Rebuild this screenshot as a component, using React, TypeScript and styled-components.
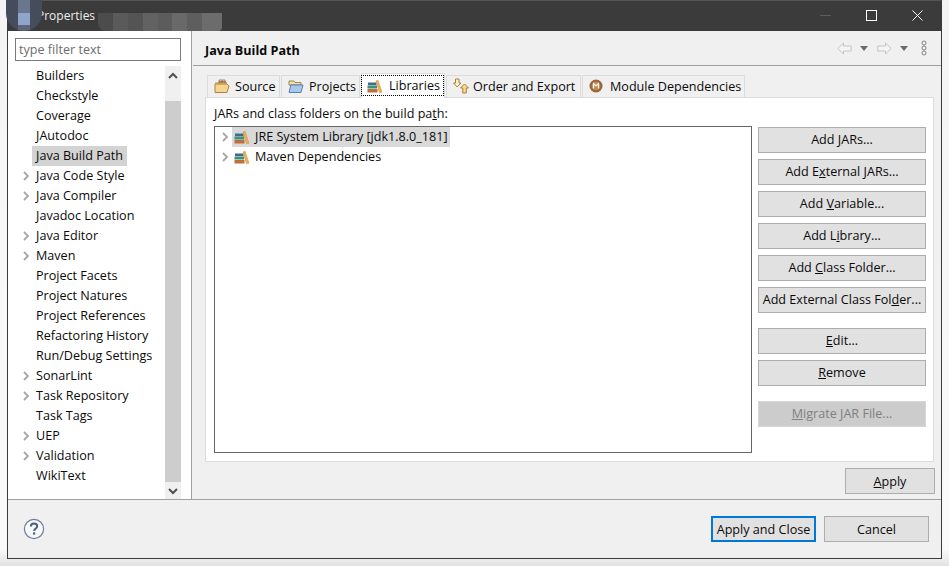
import React from 'react'
import styled, { createGlobalStyle } from 'styled-components'

const GlobalStyle = createGlobalStyle`
  html, body {
    margin: 0;
    padding: 0;
    background: #e8e8e8;
  }
  body {
    font-family: "Open Sans", "Noto Sans", "Liberation Sans", sans-serif;
    font-size: 12.6px;
    color: #0a0a0a;
  }
`

const Screen = styled.div`
  width: 949px;
  height: 566px;
  padding-left: 7px;
  box-sizing: border-box;
  overflow: hidden;
  position: relative;
  background: linear-gradient(#f4f4f4, #fafafa 97%, #e2e2e2);
`

const Window = styled.div`
  width: 935px;
  height: 559px;
  display: flex;
  flex-direction: column;
  background: #f0f0f0;
  border: solid #3b3b3b;
  border-width: 0 1px 1px 1px;
  box-sizing: border-box;
`

const TitleBar = styled.div`
  height: 31px;
  flex: none;
  display: flex;
  align-items: center;
  justify-content: space-between;
  background: #3b3b3b;
  border-top: 1px solid #555;
  box-sizing: border-box;
  color: #eee;
  padding-left: 29px;
`

const TitleText = styled.span`
  font-size: 12px;
  margin-top: -1px;
`

const WindowControls = styled.div`
  display: flex;
  align-items: center;
  gap: 35px;
  padding-right: 18px;
  margin-bottom: 2px;

  svg {
    display: block;
  }
`

const AvatarSmudge = styled.div`
  position: absolute;
  left: 6px;
  top: 0;
  width: 36px;
  height: 31px;
  border-radius: 0 0 18px 18px;
  background:
    linear-gradient(#8ea4c8, #8ea4c8) 12px 13px / 12px 12px no-repeat,
    linear-gradient(#6a768c, #6a768c) 12px 0 / 12px 13px no-repeat,
    linear-gradient(#5c6678, #5c6678) 12px 25px / 12px 6px no-repeat,
    #454c5b;
`

const NameSmudge = styled.div`
  position: absolute;
  left: 98px;
  top: 13px;
  width: 124px;
  height: 18px;
  border-radius: 0 0 4px 8px;
  background: linear-gradient(
    90deg,
    #4c4c4c 0 12%,
    #5a5a5a 12% 24%,
    #545454 24% 36%,
    #626262 36% 48%,
    #5c5c5c 48% 60%,
    #696969 60% 72%,
    #5e5e5e 72% 84%,
    #6c6c6c 84%
  );
`

const Body = styled.div`
  flex: 1;
  min-height: 0;
  display: flex;
`

const Sidebar = styled.div`
  width: 183px;
  flex: none;
  display: flex;
  flex-direction: column;
  background: #fff;
  border-right: 1px solid #a0a0a0;
`

const FilterWrap = styled.div`
  padding: 7px 10px 5px 7px;
`

const FilterInput = styled.div`
  height: 23px;
  box-sizing: border-box;
  border: 1px solid #7a7a7a;
  color: #6d6d6d;
  padding-left: 3px;
  line-height: 21px;
`

const TreeArea = styled.div`
  flex: 1;
  min-height: 0;
  display: flex;
  padding-right: 10px;
`

const TreeList = styled.div`
  flex: 1;
  min-width: 0;
`

const NavRow = styled.div`
  height: 20px;
  display: flex;
  align-items: center;
  padding-left: 14px;
`

const ArrowSlot = styled.span`
  width: 8px;
  flex: none;
  display: flex;
  justify-content: center;
`

const NavLabel = styled.span<{ $selected?: boolean }>`
  margin-left: 2px;
  padding: 0 4px;
  height: 20px;
  line-height: 20px;
  white-space: nowrap;
  background: ${({ $selected }) => ($selected ? '#d3d3d3' : 'transparent')};
`

const Scrollbar = styled.div`
  width: 16px;
  flex: none;
  display: flex;
  flex-direction: column;
  background: #f0f0f0;
`

const ScrollButton = styled.div<{ $height: number }>`
  height: ${({ $height }) => $height}px;
  flex: none;
  display: flex;
  padding-top: 6px;
  box-sizing: border-box;
  justify-content: center;
`

const ScrollThumb = styled.div`
  flex: 1;
  background: #cdcdcd;
`

const Main = styled.div`
  flex: 1;
  min-width: 0;
  display: flex;
  flex-direction: column;
`

const PageHeader = styled.div`
  height: 35px;
  flex: none;
  display: flex;
  align-items: center;
  justify-content: space-between;
  margin-left: 1px;
  padding: 0 14px 0 12px;
  border-bottom: 1px solid #a0a0a0;
  box-sizing: border-box;
`

const PageTitle = styled.span`
  font-weight: 700;
  padding-top: 5px;
`

const HistoryButtons = styled.div`
  display: flex;
  align-items: center;

  svg {
    display: block;
  }
`

const HistoryArrow = styled.span`
  margin-right: 8px;
`

const HistoryCaret = styled.span<{ $after: number }>`
  margin-right: ${({ $after }) => $after}px;
`

const PageContent = styled.div`
  flex: 1;
  min-height: 0;
  display: flex;
  flex-direction: column;
  padding: 6px 7px 0 13px;
`

const TabStrip = styled.div`
  height: 25px;
  flex: none;
  display: flex;
  align-items: flex-end;
  padding-left: 2px;
`

const Tab = styled.div<{ $active?: boolean; $width: number; $gap?: number }>`
  width: ${({ $width }) => $width}px;
  height: ${({ $active }) => ($active ? 25 : 22)}px;
  box-sizing: border-box;
  flex: none;
  display: flex;
  align-items: center;
  gap: ${({ $gap }) => $gap ?? 5}px;
  padding-left: ${({ $active }) => ($active ? 0 : 6)}px;
  padding-bottom: 1px;
  white-space: nowrap;
  background: ${({ $active }) => ($active ? '#fff' : '#f0f0f0')};
  border: 1px solid #dcdcdc;
  border-bottom: none;
  margin-right: 1px;
  margin-bottom: ${({ $active }) => ($active ? -1 : 0)}px;
  position: relative;
  z-index: ${({ $active }) => ($active ? 1 : 0)};

  svg {
    flex: none;
  }
`

const FocusLabel = styled.span`
  outline: 1px dotted #000;
  display: flex;
  align-items: center;
  gap: 6px;
  box-sizing: border-box;
  width: 81px;
  padding-left: 5px;
  height: 19px;
`

const TabPanel = styled.div`
  height: 365px;
  flex: none;
  box-sizing: border-box;
  background: #fff;
  border: 1px solid #dcdcdc;
  padding: 5px 7px 8px 8px;
  display: flex;
  flex-direction: column;
`

const PanelLabel = styled.div`
  height: 23px;
  flex: none;
  box-sizing: border-box;
  padding-top: 2px;
  line-height: 18px;
`

const PanelColumns = styled.div`
  flex: 1;
  min-height: 0;
  display: flex;
  gap: 6px;
`

const LibraryTree = styled.div`
  width: 538px;
  flex: none;
  box-sizing: border-box;
  border: 1px solid #666;
`

const LibraryRow = styled.div`
  height: 20px;
  display: flex;
  align-items: center;
  padding-left: 6px;
`

const LibraryLabel = styled.span<{ $selected?: boolean }>`
  display: flex;
  align-items: center;
  gap: 5px;
  margin-left: 3px;
  padding: 0 2px 1px;
  height: 20px;
  box-sizing: border-box;
  background: ${({ $selected }) => ($selected ? '#d9d9d9' : 'transparent')};
  white-space: nowrap;
`

const ButtonColumn = styled.div`
  width: 168px;
  flex: none;
  display: flex;
  flex-direction: column;
  gap: 6px;
  padding-top: 1px;

  & > div {
    padding-bottom: 1px;
  }
`

const PushButton = styled.div<{ $disabled?: boolean; $gapBefore?: number; $default?: boolean; $width?: number }>`
  height: 26px;
  flex: none;
  box-sizing: border-box;
  width: ${({ $width }) => ($width ? `${$width}px` : 'auto')};
  margin-top: ${({ $gapBefore }) => $gapBefore ?? 0}px;
  display: flex;
  align-items: center;
  justify-content: center;
  white-space: pre;
  background: ${({ $disabled }) => ($disabled ? '#cccccc' : '#e1e1e1')};
  border: ${({ $default }) => ($default ? '2px solid #0078d7' : '1px solid #adadad')};
  border-color: ${({ $disabled, $default }) => ($default ? '#0078d7' : $disabled ? '#d6d6d6' : '#adadad')};
  color: ${({ $disabled }) => ($disabled ? '#7f7f7f' : '#0a0a0a')};
`

const ApplyRow = styled.div`
  height: 38px;
  flex: none;
  display: flex;
  align-items: flex-end;
  justify-content: flex-end;
  padding-bottom: 6px;
  box-sizing: border-box;
  margin-right: -1px;
`

const Footer = styled.div`
  height: 59px;
  flex: none;
  box-sizing: border-box;
  border-top: 1px solid #a0a0a0;
  display: flex;
  align-items: center;
  justify-content: space-between;
  padding: 0 12px 0 15px;
`

const FooterButtons = styled.div`
  display: flex;
  gap: 8px;
`

const ArrowRight = () => (
  <svg width="8" height="10" viewBox="0 0 8 10">
    <path d="M2 1l4 4-4 4" fill="none" stroke="#a6a6a6" strokeWidth="1.8" />
  </svg>
)

const Chevron = ({ up }: { up?: boolean }) => (
  <svg width="10" height="7" viewBox="0 0 10 7">
    <path d={up ? 'M1 6l4-4 4 4' : 'M1 1l4 4 4-4'} fill="none" stroke="#505050" strokeWidth="2" />
  </svg>
)

const LibraryIcon = () => (
  <svg width="16" height="16" viewBox="0 0 16 16">
    <rect x="0.5" y="11" width="10" height="3.5" fill="#bd6f3f" />
    <rect x="0.5" y="7.5" width="9.5" height="3" fill="#3f9078" />
    <rect x="1" y="4.5" width="8.5" height="2.6" fill="#3d6d8e" />
    <path d="M9 3l2-.8 4 12-2.6.4z" fill="#eeb254" stroke="#c58a30" strokeWidth=".5" />
  </svg>
)

const SourceIcon = () => (
  <svg width="16" height="16" viewBox="0 0 16 16">
    <path d="M1 5h4l1-1h6v2.5" fill="#fbe7b2" stroke="#b08040" />
    <path d="M5 2h6v3H5zM8 2v3M5 3.5h6" fill="none" stroke="#9a6a38" strokeWidth=".8" />
    <path d="M1 14.5V6h12l2 2-2 6.5z" fill="#f5d68e" stroke="#b08040" />
  </svg>
)

const ProjectsIcon = () => (
  <svg width="16" height="16" viewBox="0 0 16 16">
    <path d="M1 3h5l1 1.5h6V7H1z" fill="#f6dfa6" stroke="#9d8650" />
    <path d="M1 14.5L2.8 7H15l-2 7.5z" fill="#a9c8ee" stroke="#5a7fb0" />
  </svg>
)

const OrderIcon = () => (
  <svg width="16" height="16" viewBox="0 0 16 16">
    <path d="M2.5 1h3.5v4h2L4.2 9 .5 5h2z" fill="#fbeec8" stroke="#a8813a" />
    <path d="M9.8 15v-5H7.5l4-4 4 4h-2.2v5z" fill="#f9d98c" stroke="#a8813a" />
  </svg>
)

const ModuleIcon = () => (
  <svg width="14" height="14" viewBox="0 0 14 14">
    <circle cx="7" cy="7" r="6.5" fill="#9b6132" />
    <circle cx="7" cy="7" r="4.4" fill="#c08a55" />
    <path d="M4.5 9.5v-5L7 7l2.5-2.5v5" fill="none" stroke="#fff" strokeWidth="1.1" />
  </svg>
)

const HelpIcon = () => (
  <svg width="22" height="22" viewBox="0 0 22 22">
    <circle cx="11" cy="11" r="9.6" fill="#f7f8fa" stroke="#6e7f9c" strokeWidth="1.2" />
    <path d="M7.8 8.6c0-1.9 1.4-3 3.2-3s3.2 1 3.2 2.7c0 2.2-3 2.4-3 4.7" fill="none" stroke="#4d5f7e" strokeWidth="2" />
    <rect x="10" y="14.4" width="2.2" height="2.2" fill="#4d5f7e" />
  </svg>
)

const BackArrow = ({ flip }: { flip?: boolean }) => (
  <svg width="15" height="13" viewBox="0 0 15 13" style={flip ? { transform: 'scaleX(-1)' } : undefined}>
    <path d="M.8 6.5L6.5 1v3h7.7v5H6.5v3z" fill="#f4f4f4" stroke="#c4c4c4" />
  </svg>
)

const DropCaret = () => (
  <svg width="8" height="5" viewBox="0 0 8 5">
    <path d="M0 0h8L4 5z" fill="#6c6c6c" />
  </svg>
)

const MenuDots = () => (
  <svg width="6" height="16" viewBox="0 0 6 16">
    <circle cx="3" cy="3" r="2" fill="#f4f4f4" stroke="#808080" />
    <circle cx="3" cy="8" r="2" fill="#f4f4f4" stroke="#808080" />
    <circle cx="3" cy="13" r="2" fill="#f4f4f4" stroke="#808080" />
  </svg>
)

const navItems: { label: string; arrow?: boolean; selected?: boolean }[] = [
  { label: 'Builders' },
  { label: 'Checkstyle' },
  { label: 'Coverage' },
  { label: 'JAutodoc' },
  { label: 'Java Build Path', selected: true },
  { label: 'Java Code Style', arrow: true },
  { label: 'Java Compiler', arrow: true },
  { label: 'Javadoc Location' },
  { label: 'Java Editor', arrow: true },
  { label: 'Maven', arrow: true },
  { label: 'Project Facets' },
  { label: 'Project Natures' },
  { label: 'Project References' },
  { label: 'Refactoring History' },
  { label: 'Run/Debug Settings' },
  { label: 'SonarLint', arrow: true },
  { label: 'Task Repository', arrow: true },
  { label: 'Task Tags' },
  { label: 'UEP', arrow: true },
  { label: 'Validation', arrow: true },
  { label: 'WikiText' }
]

const App = () => (
  <Screen>
    <GlobalStyle />
    <Window>
      <TitleBar>
        <TitleText>Properties</TitleText>
        <WindowControls>
          <svg width="11" height="1" viewBox="0 0 11 1">
            <rect width="11" height="1" fill="#5d5d5d" />
          </svg>
          <svg width="11" height="11" viewBox="0 0 11 11">
            <rect x=".5" y=".5" width="10" height="10" fill="none" stroke="#fff" />
          </svg>
          <svg width="11" height="11" viewBox="0 0 11 11">
            <path d="M.5.5l10 10M10.5.5l-10 10" stroke="#fff" />
          </svg>
        </WindowControls>
      </TitleBar>
      <Body>
        <Sidebar>
          <FilterWrap>
            <FilterInput>type filter text</FilterInput>
          </FilterWrap>
          <TreeArea>
            <TreeList>
              {navItems.map(item => (
                <NavRow key={item.label}>
                  <ArrowSlot>{item.arrow && <ArrowRight />}</ArrowSlot>
                  <NavLabel $selected={item.selected}>{item.label}</NavLabel>
                </NavRow>
              ))}
            </TreeList>
            <Scrollbar>
              <ScrollButton $height={35}><Chevron up /></ScrollButton>
              <ScrollThumb />
              <ScrollButton $height={17}><Chevron /></ScrollButton>
            </Scrollbar>
          </TreeArea>
        </Sidebar>
        <Main>
          <PageHeader>
            <PageTitle>Java Build Path</PageTitle>
            <HistoryButtons>
              <HistoryArrow><BackArrow /></HistoryArrow>
              <HistoryCaret $after={9}><DropCaret /></HistoryCaret>
              <HistoryArrow><BackArrow flip /></HistoryArrow>
              <HistoryCaret $after={13}><DropCaret /></HistoryCaret>
              <MenuDots />
            </HistoryButtons>
          </PageHeader>
          <PageContent>
            <TabStrip>
              <Tab $width={73}><SourceIcon />Source</Tab>
              <Tab $width={79}><ProjectsIcon />Projects</Tab>
              <Tab $active $width={84}>
                <FocusLabel><LibraryIcon />Libraries</FocusLabel>
              </Tab>
              <Tab $width={135} $gap={4}><OrderIcon />Order and Export</Tab>
              <Tab $width={163} $gap={7}><ModuleIcon />Module Dependencies</Tab>
            </TabStrip>
            <TabPanel>
              <PanelLabel>JARs and class folders on the build pa<u>t</u>h:</PanelLabel>
              <PanelColumns>
                <LibraryTree>
                  <LibraryRow>
                    <ArrowSlot><ArrowRight /></ArrowSlot>
                    <LibraryLabel $selected><LibraryIcon />JRE System Library [jdk1.8.0_181]</LibraryLabel>
                  </LibraryRow>
                  <LibraryRow>
                    <ArrowSlot><ArrowRight /></ArrowSlot>
                    <LibraryLabel><LibraryIcon />Maven Dependencies</LibraryLabel>
                  </LibraryRow>
                </LibraryTree>
                <ButtonColumn>
                  <PushButton>Add <u>J</u>ARs...</PushButton>
                  <PushButton>Add E<u>x</u>ternal JARs...</PushButton>
                  <PushButton>Add <u>V</u>ariable...</PushButton>
                  <PushButton>Add L<u>i</u>brary...</PushButton>
                  <PushButton>Add <u>C</u>lass Folder...</PushButton>
                  <PushButton>Add External Class Fol<u>d</u>er...</PushButton>
                  <PushButton $gapBefore={9}><u>E</u>dit...</PushButton>
                  <PushButton><u>R</u>emove</PushButton>
                  <PushButton $disabled $gapBefore={9}><u>M</u>igrate JAR File...</PushButton>
                </ButtonColumn>
              </PanelColumns>
            </TabPanel>
            <ApplyRow>
              <PushButton $width={90}><u>A</u>pply</PushButton>
            </ApplyRow>
          </PageContent>
        </Main>
      </Body>
      <Footer>
        <HelpIcon />
        <FooterButtons>
          <PushButton $default $width={105}>Apply and Close</PushButton>
          <PushButton $width={105}>Cancel</PushButton>
        </FooterButtons>
      </Footer>
    </Window>
    <AvatarSmudge />
    <NameSmudge />
  </Screen>
)

export default App
